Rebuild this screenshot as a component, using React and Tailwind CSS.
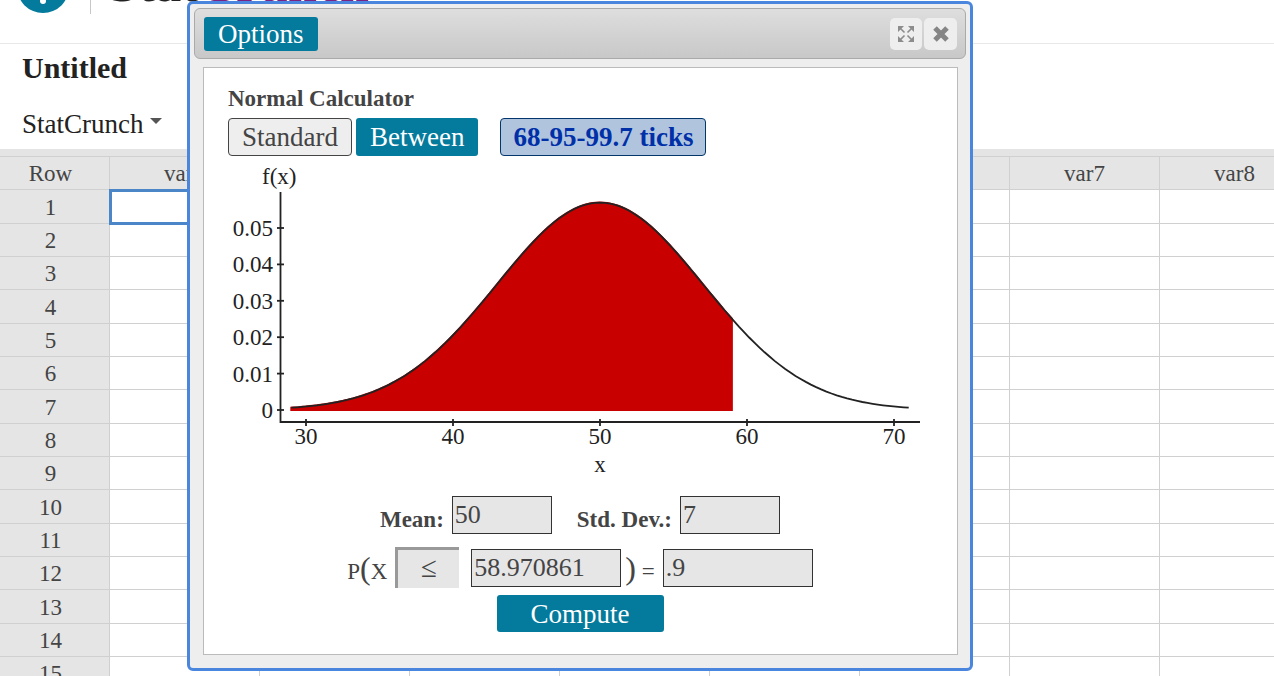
import { useState } from "react";

const columns = ["var1", "var2", "var3", "var4", "var5", "var6", "var7", "var8"];
const rows = Array.from({ length: 18 }, (_, i) => i + 1);

// plot scales
const px = (v) => 372 + (v - 50) * 14.7;
const py = (d) => 254 - d * 3640;

const density = (x, mean, sd) =>
  Math.exp(-((x - mean) ** 2) / (2 * sd * sd)) / (sd * Math.sqrt(2 * Math.PI));

function curve(from, to) {
  const points = [];
  for (let i = 0; i <= 120; i++) {
    const x = from + ((to - from) * i) / 120;
    points.push(`${px(x).toFixed(1)},${py(density(x, 50, 7)).toFixed(1)}`);
  }
  return points.join(" L");
}

function NormalPlot() {
  const cut = 58.970861;

  return (
    <svg viewBox="0 0 704 328" className="block w-full" role="img" aria-label="Normal density">
      <path
        d={`M${px(29)},${py(0)} L${curve(29, cut)} L${px(cut)},${py(0)} Z`}
        fill="#c80000"
        stroke="#c80000"
        strokeWidth="2"
      />
      <path d={`M${curve(29, 71)}`} fill="none" stroke="#222" strokeWidth="1.8" />

      <g stroke="#222" strokeWidth="1.8">
        <path d="M52.5 36V267" />
        <path d="M52 266H692" />
        {[0, 0.01, 0.02, 0.03, 0.04, 0.05].map((d) => (
          <path key={d} d={`M49 ${py(d)}h7`} />
        ))}
        {[30, 40, 50, 60, 70].map((x) => (
          <path key={x} d={`M${px(x)} 263v7`} />
        ))}
      </g>

      <g fill="#222" fontSize="23">
        <text x="34" y="28">f(x)</text>
        {[0, 0.01, 0.02, 0.03, 0.04, 0.05].map((d) => (
          <text key={d} x="45" y={py(d) + 8} textAnchor="end">{d}</text>
        ))}
        {[30, 40, 50, 60, 70].map((x) => (
          <text key={x} x={px(x)} y="288" textAnchor="middle">{x}</text>
        ))}
        <text x="372" y="316" textAnchor="middle">x</text>
      </g>
    </svg>
  );
}

function Logo() {
  return (
    <div className="flex -mt-[39px] h-[53px] pl-[17px]">
      <svg width="52" height="52" viewBox="0 0 52 52">
        <circle cx="26" cy="26" r="26" fill="#047a9c" />
        <path d="M24 12h4l-1 22h-2z" fill="#fff" />
        <circle cx="26" cy="40" r="3" fill="#fff" />
      </svg>
      <div className="w-px ml-[21px] mr-[18px] bg-[#c7c7c7]" />
      <div className="text-[52px] leading-[46px] font-bold text-[#222]">
        Stat<span className="text-[#7b2382]">Crunch</span>
      </div>
    </div>
  );
}

function DataGrid() {
  return (
    <div className="flex-1 overflow-hidden border-t-[7px] border-[#e4e4e4]">
      <table className="table-fixed w-[1310px] border-separate border-spacing-0 text-[23px] leading-7 text-[#444]">
        <thead>
          <tr className="h-[34px] bg-[#e5e5e5]">
            <th className="w-[110px] p-0 pt-0.5 pr-2 font-normal border-y border-r border-[#d0d0d0]">Row</th>
            {columns.map((name) => (
              <th key={name} className="w-[150px] p-0 pt-0.5 font-normal border-y border-r border-[#d0d0d0]">
                {name}
              </th>
            ))}
          </tr>
        </thead>
        <tbody>
          {rows.map((row) => (
            <tr key={row} className="h-[33px] nth-[3n+1]:h-[34px]">
              <th className="p-0 pt-0.5 pr-2 font-normal bg-[#e5e5e5] border-b border-r border-[#d0d0d0]">{row}</th>
              {columns.map((name, i) => (
                <td
                  key={name}
                  className={
                    row === 1 && i === 0
                      ? "p-0 border-b border-r border-[#d0d0d0] outline-3 -outline-offset-2 outline-[#4a86c8]"
                      : "p-0 border-b border-r border-[#d0d0d0]"
                  }
                />
              ))}
            </tr>
          ))}
        </tbody>
      </table>
    </div>
  );
}

function CalculatorDialog() {
  const [mean, setMean] = useState("50");
  const [sd, setSd] = useState("7");
  const [value, setValue] = useState("58.970861");
  const [prob, setProb] = useState(".9");

  const field = "h-[38px] px-0.5 border border-[#333] bg-[#e6e6e6] text-[26px]";

  return (
    <div
      role="dialog"
      aria-label="Normal Calculator"
      className="absolute left-[187px] top-px w-[786px] p-1 rounded-md border-3 border-[#4a86de] bg-[#eee] text-[#444]"
    >
      <div className="flex items-center h-[51px] px-2 pl-[9px] rounded-md border border-[#aaa] bg-linear-to-b from-[#dedede] to-[#c8c8c8]">
        <button className="h-[34px] px-[14px] rounded-[3px] bg-[#047a9c] text-white text-[27px] leading-8">
          Options
        </button>
        <button aria-label="Maximize" className="ml-auto w-8 h-8 grid place-items-center rounded-[5px] bg-[#eee]">
          <svg width="16" height="16" viewBox="0 0 16 16" fill="#8c8c8c" stroke="#8c8c8c" strokeWidth="1.6">
            <path stroke="none" d="M0 0h6L0 6zM16 0v6L10 0zM0 16v-6l6 6zM16 16h-6l6-6z" />
            <path d="M2 2l4.5 4.5M14 2L9.5 6.5M2 14l4.5-4.5M14 14L9.5 9.5" />
          </svg>
        </button>
        <button aria-label="Close" className="ml-0.5 w-[33px] h-8 grid place-items-center rounded-[5px] bg-[#eee]">
          <svg width="18" height="16" viewBox="0 0 18 16" stroke="#858585" strokeWidth="5">
            <path d="M3 2l12 12M15 2L3 14" />
          </svg>
        </button>
      </div>

      <div className="mt-2 ml-[9px] mr-2 mb-[9px] pl-6 pr-[25px] pt-[17px] pb-[22px] border border-[#bbb] bg-white">
        <h2 className="text-[23px] leading-7 font-bold">Normal Calculator</h2>

        <div className="flex mt-[5px] text-[27px] leading-8">
          <button className="h-[38px] px-[13px] rounded border border-[#444] bg-[#eee]">Standard</button>
          <button className="h-[38px] px-[14px] ml-1 rounded-[3px] bg-[#047a9c] text-white">Between</button>
          <button className="h-[38px] px-3 ml-[22px] rounded border border-[#05366b] bg-[#b0c4de] font-bold text-[#0030a8]">
            68-95-99.7 ticks
          </button>
        </div>

        <NormalPlot />

        <div className="flex justify-center items-end mt-3 text-[23px] leading-7">
          <label htmlFor="mean" className="mr-2 font-bold">Mean:</label>
          <input id="mean" className={`${field} w-[100px]`} value={mean} onChange={(e) => setMean(e.target.value)} />
          <label htmlFor="sd" className="ml-[25px] mr-2 font-bold">Std. Dev.:</label>
          <input id="sd" className={`${field} w-[100px]`} value={sd} onChange={(e) => setSd(e.target.value)} />
        </div>

        <div className="flex justify-center items-center h-[41px] mt-[13px] text-[23px] leading-[38px]">
          <label htmlFor="value" className="mr-2 pt-1">
            P<span className="text-[32px]">(</span>X
          </label>
          <select
            aria-label="Comparison"
            defaultValue="le"
            className="appearance-none w-16 h-[41px] pb-1 border-t-3 border-l-3 border-[#999] bg-[#e6e6e6] text-[29px] leading-8 text-center [text-align-last:center]"
          >
            <option value="le">≤</option>
            <option value="ge">≥</option>
          </select>
          <input id="value" className={`${field} w-[150px] ml-3 mr-1`} value={value} onChange={(e) => setValue(e.target.value)} />
          <label htmlFor="prob" className="mr-2 pt-1">
            <span className="text-[32px]">)</span> =
          </label>
          <input id="prob" className={`${field} w-[150px]`} value={prob} onChange={(e) => setProb(e.target.value)} />
        </div>

        <button className="block mx-auto mt-[7px] w-[167px] h-[37px] rounded-[3px] bg-[#047a9c] text-white text-[27px] leading-8">
          Compute
        </button>
      </div>
    </div>
  );
}

export default function App() {
  return (
    <div className="relative h-screen overflow-hidden flex flex-col bg-white font-['Liberation_Serif','Times_New_Roman',serif]">
      <header className="flex h-11 border-b border-[#e8e8e8]">
        <Logo />
      </header>

      <div className="h-[105px] px-[22px] pt-2 text-[#222]">
        <h1 className="text-[30px] leading-8 font-bold">Untitled</h1>
        <button className="flex items-center gap-1.5 mt-6 text-[27px] leading-8">
          StatCrunch
          <svg width="12" height="6" viewBox="0 0 12 6" className="mb-1.5">
            <path d="M0 0h12L6 6z" fill="#555" />
          </svg>
        </button>
      </div>

      <DataGrid />
      <CalculatorDialog />
    </div>
  );
}
